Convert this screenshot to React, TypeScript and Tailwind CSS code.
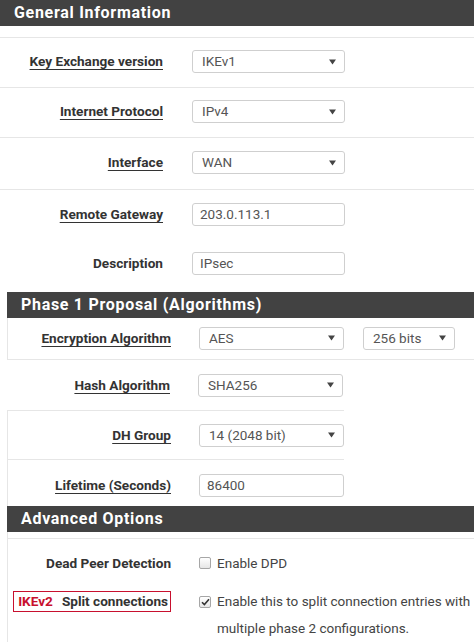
import React from "react";

const font = { fontFamily: "Roboto, 'Liberation Sans', sans-serif" };

function Arrow() {
  return (
    <svg width="7" height="6" viewBox="0 0 7 6" className="shrink-0">
      <path d="M0 0.5 H7 L3.5 5.5 Z" fill="#444" />
    </svg>
  );
}

function Select({ value, w = "w-[153px]" }: { value: string; w?: string }) {
  return (
    <div
      className={`${w} h-[23px] border border-[#cfcfcf] rounded-[3px] bg-white flex items-center justify-between pl-[9px] pr-[8px] text-[13.5px] text-[#555]`}
    >
      <span>{value}</span>
      <Arrow />
    </div>
  );
}

function Input({ value, w = "w-[153px]" }: { value: string; w?: string }) {
  return (
    <div
      className={`${w} h-[23px] border border-[#cfcfcf] rounded-[3px] bg-white flex items-center pl-[7px] text-[13.5px] text-[#555]`}
    >
      {value}
    </div>
  );
}

function Label({ text, under = true }: { text: string; under?: boolean }) {
  return (
    <div className="w-[163px] shrink-0 text-right text-[13.6px] font-bold text-[#333] whitespace-nowrap">
      <span className={under ? "underline decoration-1 underline-offset-[3px]" : ""}>{text}</span>
    </div>
  );
}

function Header({ title }: { title: string }) {
  return (
    <div className="h-[26px] bg-[#424242] flex items-center px-[14px] text-white font-bold text-[16px] tracking-[0.7px] whitespace-nowrap">
      {title}
    </div>
  );
}

function CheckBox({ checked }: { checked?: boolean }) {
  return (
    <div className="w-[12px] h-[12px] shrink-0 rounded-[2px] border border-[#a6a6a6] bg-gradient-to-b from-white to-[#e6e6e6] flex items-center justify-center">
      {checked && (
        <svg width="9" height="8" viewBox="0 0 9 8">
          <path d="M1 4.2 L3.4 6.6 L8 1.2" stroke="#333" strokeWidth="1.6" fill="none" />
        </svg>
      )}
    </div>
  );
}

export default function App() {
  return (
    <div className="w-[474px] h-[643px] bg-white overflow-hidden" style={font}>
      {/* General Information */}
      <Header title="General Information" />
      <div className="h-[12px] border-b border-[#e6e6e6]" />
      <div className="h-[50px] border-b border-[#e6e6e6] flex items-center gap-[29px] pb-[2px]">
        <Label text="Key Exchange version" />
        <Select value="IKEv1" />
      </div>
      <div className="h-[50px] border-b border-[#e6e6e6] flex items-center gap-[29px] pb-[2px]">
        <Label text="Internet Protocol" />
        <Select value="IPv4" />
      </div>
      <div className="h-[52px] border-b border-[#e6e6e6] flex items-center gap-[29px] pb-[2px]">
        <Label text="Interface" />
        <Select value="WAN" />
      </div>
      <div className="h-[49px] flex items-center gap-[29px]">
        <Label text="Remote Gateway" />
        <Input value="203.0.113.1" />
      </div>
      <div className="h-[53px] flex items-center gap-[29px] pb-[4px]">
        <Label text="Description" under={false} />
        <Input value="IPsec" />
      </div>

      {/* Phase 1 */}
      <div className="ml-[7px]">
        <Header title="Phase 1 Proposal (Algorithms)" />
        <div className="h-[42px] border-l border-b border-[#e6e6e6] flex items-center gap-[28px] pb-[1px]">
          <Label text="Encryption Algorithm" />
          <div className="flex items-center gap-[19px]">
            <Select value="AES" w="w-[145px]" />
            <Select value="256 bits" w="w-[92px]" />
          </div>
        </div>
        <div className="h-[50px] flex items-center gap-[28px]">
          <Label text="Hash Algorithm" />
          <Select value="SHA256" w="w-[145px]" />
        </div>
        <div className="w-[337px] border-t border-l border-[#e6e6e6]">
          <div className="h-[49px] border-b border-[#e6e6e6] flex items-center gap-[28px]">
            <Label text="DH Group" />
            <Select value="14 (2048 bit)" w="w-[145px]" />
          </div>
          <div className="h-[46px] flex items-center gap-[28px] pt-[4px]">
            <Label text="Lifetime (Seconds)" />
            <Input value="86400" w="w-[145px]" />
          </div>
        </div>

        {/* Advanced */}
        <Header title="Advanced Options" />
        <div className="border-l border-[#e6e6e6] h-[110px]">
          <div className="h-[7px] border-b border-[#e6e6e6]" />
          <div className="h-[47px] flex items-center gap-[28px] pt-[1px]">
            <Label text="Dead Peer Detection" under={false} />
            <div className="flex items-center gap-[6px] text-[13.5px] text-[#444]">
              <CheckBox />
              <span>Enable DPD</span>
            </div>
          </div>
          <div className="flex items-start gap-[28px] pt-[5px]">
            <div className="w-[163px] shrink-0 flex justify-end">
              <div className="h-[21px] border border-[#c8102e] flex items-center pl-[4px] pr-[2px] gap-[9px] text-[13.6px] font-bold whitespace-nowrap">
                <span className="text-[#c8102e]">IKEv2</span>
                <span className="text-[#333]">Split connections</span>
              </div>
            </div>
            <div className="flex items-start gap-[6px] text-[13.5px] text-[#444] leading-[27px] -mt-[3px]">
              <div className="pt-[8px]">
                <CheckBox checked />
              </div>
              <span className="whitespace-nowrap">
                Enable this to split connection entries with
                <br />
                multiple phase 2 configurations.
              </span>
            </div>
          </div>
        </div>
      </div>
    </div>
  );
}
